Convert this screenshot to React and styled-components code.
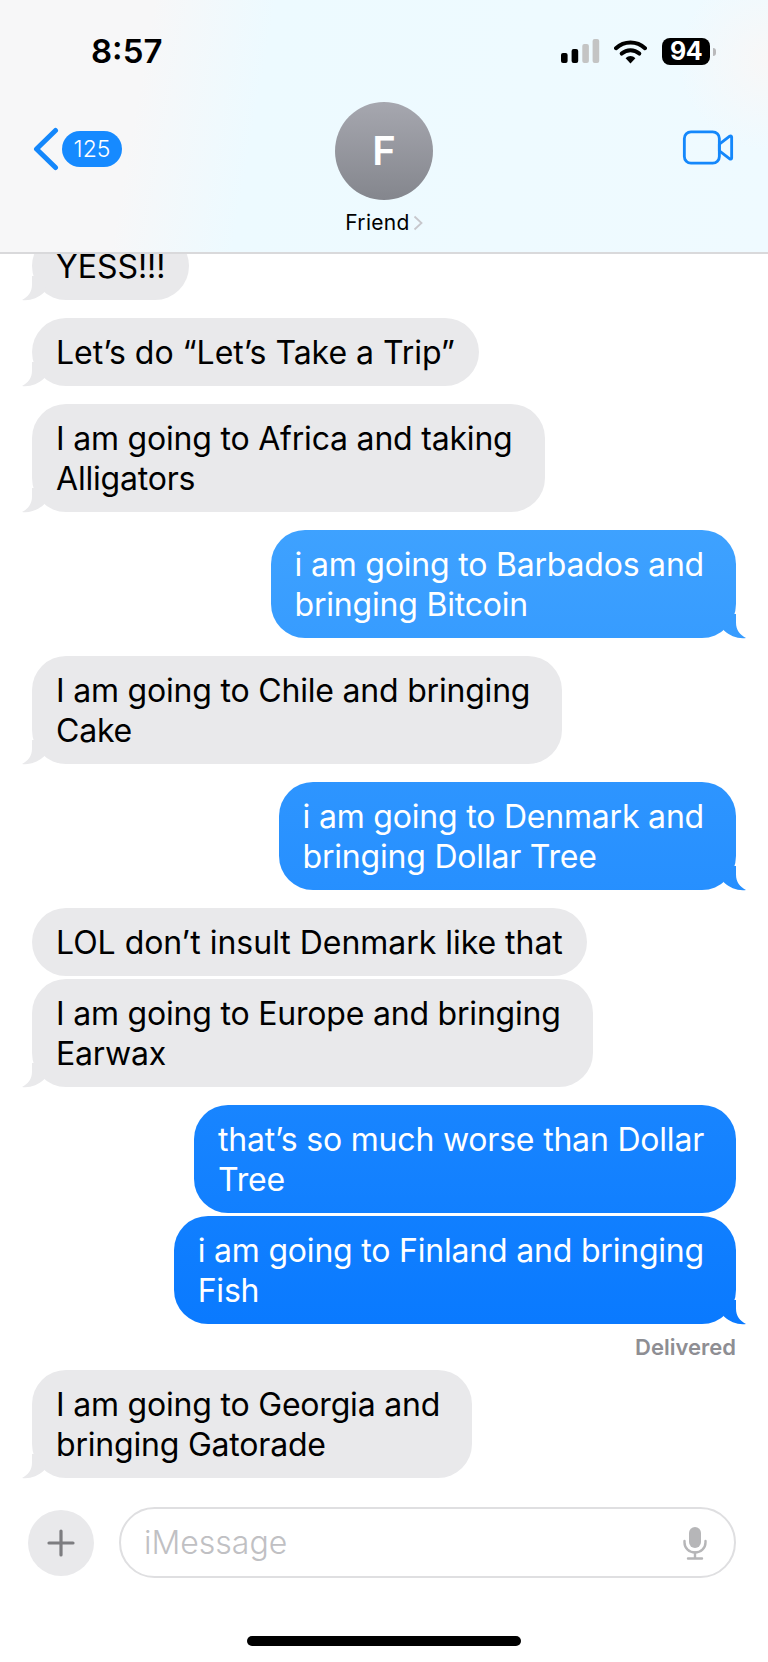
import React from 'react';
import styled, { createGlobalStyle } from 'styled-components';

const messages = [
  { id: 1, lines: ['YESS!!!'], tail: true },
  { id: 2, lines: ['Let’s do “Let’s Take a Trip”'], tail: true },
  { id: 3, lines: ['I am going to Africa and taking', 'Alligators'], tail: true },
  { id: 4, mine: true, lines: ['i am going to Barbados and', 'bringing Bitcoin'], tail: true },
  { id: 5, lines: ['I am going to Chile and bringing', 'Cake'], tail: true },
  { id: 6, mine: true, lines: ['i am going to Denmark and', 'bringing Dollar Tree'], tail: true },
  { id: 7, lines: ['LOL don’t insult Denmark like that'] },
  { id: 8, lines: ['I am going to Europe and bringing', 'Earwax'], tail: true, grouped: true },
  { id: 9, mine: true, lines: ['that’s so much worse than Dollar', 'Tree'] },
  { id: 10, mine: true, lines: ['i am going to Finland and bringing', 'Fish'], tail: true, grouped: true, delivered: true },
  { id: 11, lines: ['I am going to Georgia and', 'bringing Gatorade'], tail: true, afterStatus: true },
];

function App() {
  return (
    <Screen>
      <GlobalStyle />
      <Header>
        <StatusBar>
          <Clock>8:57</Clock>
          <StatusIcons>
            <svg width="40" height="25" viewBox="0 0 40 25">
              <rect x="1" y="14" width="6.6" height="10" rx="2" fill="#000" />
              <rect x="11.6" y="10" width="6.6" height="14" rx="2" fill="#000" />
              <rect x="22.3" y="5" width="6.6" height="19" rx="2" fill="#c4c4c4" />
              <rect x="32.6" y="0" width="6.6" height="24" rx="2" fill="#c4c4c4" />
            </svg>
            <svg width="33" height="25" viewBox="0 0 33 25">
              <path d="M2 9.2C10.2 1.6 22.8 1.6 31 9.2" fill="none" stroke="#000" strokeWidth="4" strokeLinecap="round" />
              <path d="M7.7 14.6C12.9 10 20.1 10 25.3 14.6" fill="none" stroke="#000" strokeWidth="4" strokeLinecap="round" />
              <path d="M11.6 19.2C14.7 16.2 18.3 16.2 21.4 19.2L16.5 24.4Z" fill="#000" />
            </svg>
            <Battery>94<BatteryNub /></Battery>
          </StatusIcons>
        </StatusBar>
        <NavBar>
          <BackLink>
            <svg width="28" height="44" viewBox="0 0 28 44">
              <path d="M23.5 3.5L4.5 22L23.5 40.5" fill="none" stroke="#1487fb" strokeWidth="5" strokeLinecap="round" strokeLinejoin="round" />
            </svg>
            <CountBadge>125</CountBadge>
          </BackLink>
          <Contact>
            <Avatar>F</Avatar>
            <ContactName>
              Friend
              <svg width="10" height="16" viewBox="0 0 10 16">
                <path d="M1.5 1.5L8.5 8L1.5 14.5" fill="none" stroke="#c7c7cc" strokeWidth="1.8" />
              </svg>
            </ContactName>
          </Contact>
          <VideoButton>
            <svg width="52" height="35" viewBox="0 0 54 37">
              <rect x="2" y="2" width="37" height="33" rx="7" fill="none" stroke="#1487fb" strokeWidth="3" />
              <path d="M39 15L50 6.5C51 5.8 52 6.3 52 7.5V29.5C52 30.7 51 31.2 50 30.5L39 22Z" fill="none" stroke="#1487fb" strokeWidth="3" strokeLinejoin="round" />
            </svg>
          </VideoButton>
        </NavBar>
      </Header>

      <Thread>
        {messages.map((m) => (
          <React.Fragment key={m.id}>
            <Bubble
              $mine={m.mine}
              $tail={m.tail}
              $grouped={m.grouped}
              $afterStatus={m.afterStatus}
              $multi={m.lines.length > 1}
            >
              {m.lines.map((line) => (
                <div key={line}>{line}</div>
              ))}
            </Bubble>
            {m.delivered && <Receipt>Delivered</Receipt>}
          </React.Fragment>
        ))}
      </Thread>

      <Composer>
        <PlusButton>
          <svg width="28" height="28" viewBox="0 0 28 28">
            <path d="M14 2V26M2 14H26" stroke="#7d7d80" strokeWidth="3.2" strokeLinecap="round" />
          </svg>
        </PlusButton>
        <InputPill>
          <Placeholder>iMessage</Placeholder>
          <svg width="26" height="34" viewBox="0 0 26 34">
            <rect x="7" y="1" width="12" height="21" rx="6" fill="#b6b6b8" />
            <path d="M2.5 15V16.5C2.5 22.3 7.2 26.5 13 26.5C18.8 26.5 23.5 22.3 23.5 16.5V15" fill="none" stroke="#b6b6b8" strokeWidth="2.4" strokeLinecap="round" />
            <path d="M13 26.5V32M6 32.5H20" stroke="#b6b6b8" strokeWidth="2.4" strokeLinecap="round" />
          </svg>
        </InputPill>
      </Composer>

      <HomeArea>
        <HomeBar />
      </HomeArea>
    </Screen>
  );
}

const GlobalStyle = createGlobalStyle`
  html, body {
    margin: 0;
    padding: 0;
    background: #fff;
  }
  body {
    font-family: Inter, "Liberation Sans", sans-serif;
  }
`;

const Screen = styled.div`
  width: 768px;
  height: 1662px;
  display: flex;
  flex-direction: column;
  overflow: hidden;
  background: #fff;
`;

const Header = styled.header`
  height: 254px;
  box-sizing: border-box;
  flex-shrink: 0;
  border-bottom: 2px solid #d9d9db;
  background:
    radial-gradient(circle at 100% 24%, #f8f7f7 0, rgba(248, 247, 247, 0) 90px),
    linear-gradient(100deg, #f7f7f8 19%, #edfaff 34%, #effaff 100%);
`;

const StatusBar = styled.div`
  height: 102px;
  padding: 0 58px 0 91px;
  display: flex;
  justify-content: space-between;
  align-items: flex-start;
  box-sizing: border-box;
`;

const Clock = styled.div`
  margin-top: 30px;
  font-size: 33px;
  line-height: 42px;
  font-weight: 600;
  color: #000;
`;

const StatusIcons = styled.div`
  margin-top: 38px;
  display: flex;
  align-items: center;
  gap: 14px;
`;

const Battery = styled.div`
  position: relative;
  width: 48px;
  height: 27px;
  margin-left: 1px;
  border-radius: 8px;
  background: #000;
  color: #fff;
  font-size: 25px;
  line-height: 27px;
  font-weight: 700;
  letter-spacing: -0.5px;
  text-align: center;
`;

const BatteryNub = styled.span`
  position: absolute;
  top: 10px;
  right: -6px;
  width: 3px;
  height: 8px;
  border-radius: 0 3px 3px 0;
  background: #b9b9bb;
`;

const NavBar = styled.div`
  padding: 0 33px;
  display: grid;
  grid-template-columns: 1fr auto 1fr;
  align-items: start;
`;

const BackLink = styled.div`
  margin-top: 25px;
  display: flex;
  align-items: center;
  gap: 2px;
  margin-left: -1px;
`;

const CountBadge = styled.span`
  width: 60px;
  height: 36px;
  border-radius: 18px;
  background: #168aff;
  color: #fff;
  font-size: 23px;
  font-weight: 300;
  line-height: 36px;
  text-align: center;
`;

const Contact = styled.div`
  display: flex;
  flex-direction: column;
  align-items: center;
  gap: 10px;
`;

const Avatar = styled.div`
  width: 98px;
  height: 98px;
  border-radius: 50%;
  background: linear-gradient(180deg, #a6a7af 0%, #84868d 100%);
  color: #fff;
  font-size: 40px;
  font-weight: 600;
  line-height: 98px;
  text-align: center;
`;

const ContactName = styled.div`
  display: flex;
  align-items: center;
  gap: 3px;
  font-size: 21px;
  letter-spacing: 0.3px;
  line-height: 26px;
  color: #000;
`;

const VideoButton = styled.div`
  margin-top: 28px;
  display: flex;
  justify-content: flex-end;
  margin-right: 1px;
`;

const Thread = styled.main`
  flex: 1;
  min-height: 0;
  padding: 0 32px 29px;
  display: flex;
  flex-direction: column;
  justify-content: flex-end;
  overflow: hidden;
`;

const blueFill = 'linear-gradient(180deg, #40a3ff 500px, #0a7aff 1320px) fixed';

const Bubble = styled.div`
  position: relative;
  flex-shrink: 0;
  align-self: ${(p) => (p.$mine ? 'flex-end' : 'flex-start')};
  margin-top: ${(p) => (p.$grouped ? '3px' : p.$afterStatus ? '9px' : '18px')};
  padding: 15px ${(p) => (p.$multi ? '32px' : '24px')} 13px 24px;
  border-radius: 34px;
  background: ${(p) => (p.$mine ? blueFill : '#e9e9eb')};
  color: ${(p) => (p.$mine ? '#fff' : '#000')};
  font-size: 32px;
  line-height: 40px;
  letter-spacing: ${(p) => (p.$multi ? '-0.2px' : '-0.03px')};
  white-space: nowrap;

  &::after {
    content: '';
    display: ${(p) => (p.$tail ? 'block' : 'none')};
    position: absolute;
    bottom: -1px;
    width: 30px;
    height: 25px;
    ${(p) => (p.$mine ? 'right: -10px;' : 'left: -10px;')}
    background: ${(p) => (p.$mine ? blueFill : '#e9e9eb')};
    clip-path: ${(p) =>
      p.$mine
        ? "path('M20 0L20 8.5C20 16 24 21 30 24C22 25 14 22 8 16.5L2 0Z')"
        : "path('M10 0L10 8.5C10 16 6 21 0 24C8 25 16 22 22 16.5L28 0Z')"};
  }
`;

const Receipt = styled.div`
  align-self: flex-end;
  margin-top: 10px;
  font-size: 22px;
  line-height: 27px;
  font-weight: 600;
  color: #8e8e93;
`;

const Composer = styled.div`
  flex-shrink: 0;
  height: 71px;
  padding: 0 32px 0 28px;
  display: flex;
  align-items: center;
  gap: 25px;
`;

const PlusButton = styled.div`
  width: 66px;
  height: 66px;
  flex-shrink: 0;
  border-radius: 50%;
  background: #e9e9eb;
  display: flex;
  align-items: center;
  justify-content: center;
`;

const InputPill = styled.div`
  flex: 1;
  height: 71px;
  box-sizing: border-box;
  padding: 0 26px 0 23px;
  border: 2px solid #dfdfe1;
  border-radius: 36px;
  display: flex;
  align-items: center;
  justify-content: space-between;
`;

const Placeholder = styled.span`
  font-size: 32px;
  font-weight: 300;
  color: #c0c0c3;
`;

const HomeArea = styled.div`
  flex-shrink: 0;
  height: 84px;
  padding-bottom: 16px;
  box-sizing: border-box;
  display: flex;
  align-items: flex-end;
  justify-content: center;
`;

const HomeBar = styled.div`
  width: 274px;
  height: 10px;
  border-radius: 5px;
  background: #000;
`;

export default App;
